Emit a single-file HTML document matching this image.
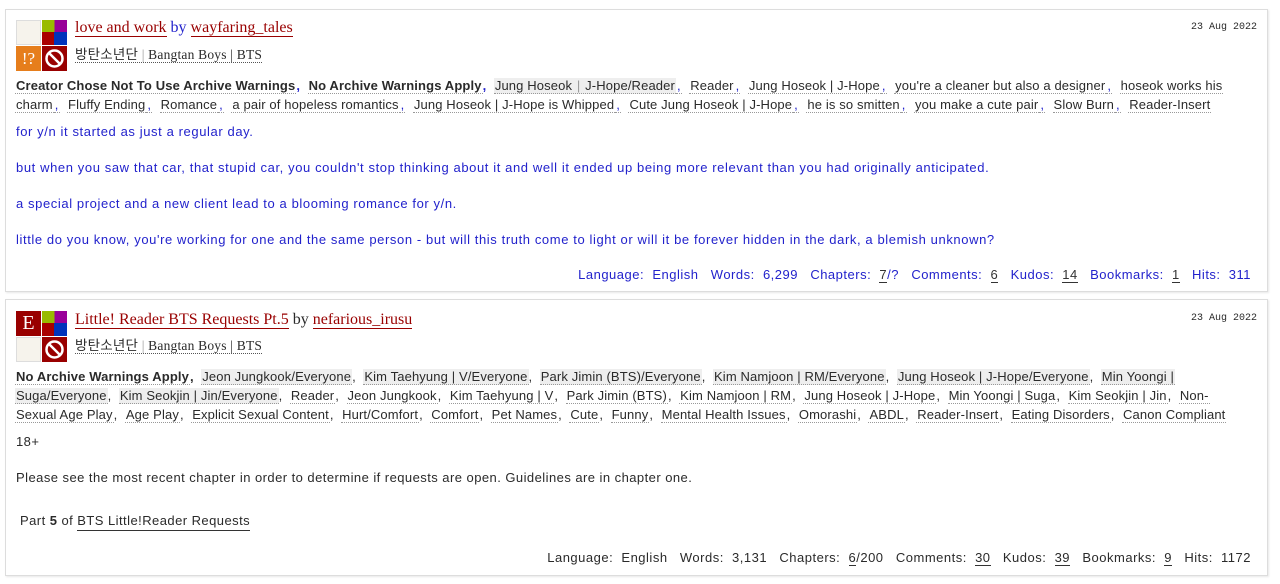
<!DOCTYPE html>
<html><head><meta charset="utf-8">
<style>
body{margin:0;background:#fff;font-family:"Liberation Sans","Noto Sans CJK KR",sans-serif;font-size:13px;letter-spacing:0.45px;color:#2a2a2a;width:1280px;height:584px;overflow:hidden;position:relative}
.box{position:absolute;left:5px;width:1261px;border:1px solid #ddd;box-shadow:1px 1px 2px #e8e8e8}
.l{position:absolute;white-space:nowrap}
.h{font-family:"Liberation Serif","Noto Serif CJK SC",serif;font-size:16px;letter-spacing:0}
.h a{color:#900;text-decoration:none;border-bottom:1px solid #900}
.f{font-family:"Liberation Serif","Noto Sans CJK KR",serif;font-size:13.5px;letter-spacing:0.2px}
.f span{border-bottom:1px dotted #555}
.t{letter-spacing:0.13px}
.t span{border-bottom:1px dotted #999;padding:0 1px}
.t .g{background:#eee}
.c{color:#22c}
.s{letter-spacing:0.6px}
.date{position:absolute;right:10px;font-family:"Liberation Mono",monospace;font-size:10px;letter-spacing:0}
.ic{position:absolute;width:25px;height:25px;letter-spacing:0}
.u{border-bottom:1px solid #333}
.st{letter-spacing:0.5px}
</style></head><body>

<div class="box" style="top:9px;height:281px">
  <div class="ic" style="left:10px;top:10px;background:#f6f3ec;border:1px solid #ddd;width:23px;height:23px"></div>
  <div class="ic" style="left:36px;top:10px;background:linear-gradient(to right,#9b0 50%,#909 50%);"><div style="position:absolute;top:12px;left:0;width:12px;height:13px;background:#a00"></div><div style="position:absolute;top:12px;left:12px;width:13px;height:13px;background:#03b"></div></div>
  <div class="ic" style="left:10px;top:36px;background:#e67e1c;color:#fff;font:17px 'Liberation Serif',serif;text-align:center;line-height:25px">!?</div>
  <div class="ic" style="left:36px;top:36px;background:#900"><svg width="25" height="25"><circle cx="12.5" cy="12.5" r="8" fill="none" stroke="#fff" stroke-width="2.5"/><line x1="7" y1="7" x2="18" y2="18" stroke="#fff" stroke-width="2.5"/></svg></div>
  <div class="l h" style="left:69px;top:9px"><a>love and work</a> <span style="color:#22c">by</span> <a>wayfaring_tales</a></div>
  <div class="l f" style="left:69px;top:33px"><span>방탄소년단 <span style="color:#999;border:0">|</span> Bangtan Boys | BTS</span></div>
  <div class="date" style="top:12px">23 Aug 2022</div>
  <div class="l t" style="left:9px;top:66px;line-height:19px"><span><b>Creator Chose Not To Use Archive Warnings</b></span><b class="c">,</b> &nbsp;<span><b>No Archive Warnings Apply</b></span><b class="c">,</b> &nbsp;<span class="g">Jung Hoseok <span style="color:#999;border:0">|</span> J-Hope/Reader</span><span class="c">,</span> &nbsp;<span>Reader</span><span class="c">,</span> &nbsp;<span>Jung Hoseok | J-Hope</span><span class="c">,</span> &nbsp;<span>you're a cleaner but also a designer</span><span class="c">,</span> &nbsp;<span>hoseok works his</span><br><span>charm</span><span class="c">,</span> &nbsp;<span>Fluffy Ending</span><span class="c">,</span> &nbsp;<span>Romance</span><span class="c">,</span> &nbsp;<span>a pair of hopeless romantics</span><span class="c">,</span> &nbsp;<span>Jung Hoseok | J-Hope is Whipped</span><span class="c">,</span> &nbsp;<span>Cute Jung Hoseok | J-Hope</span><span class="c">,</span> &nbsp;<span>he is so smitten</span><span class="c">,</span> &nbsp;<span>you make a cute pair</span><span class="c">,</span> &nbsp;<span>Slow Burn</span><span class="c">,</span> &nbsp;<span>Reader-Insert</span></div>
  <div class="l c s" style="left:10px;top:114px">for y/n it started as just a regular day.</div>
  <div class="l c s" style="left:10px;top:150px">but when you saw that car, that stupid car, you couldn't stop thinking about it and well it ended up being more relevant than you had originally anticipated.</div>
  <div class="l c s" style="left:10px;top:186px">a special project and a new client lead to a blooming romance for y/n.</div>
  <div class="l c s" style="left:10px;top:222px">little do you know, you're working for one and the same person - but will this truth come to light or will it be forever hidden in the dark, a blemish unknown?</div>
  <div class="l c st" style="right:16px;top:257px">Language: &nbsp;English &nbsp; Words: &nbsp;6,299 &nbsp; Chapters: &nbsp;<span class="u" style="color:#333">7</span>/? &nbsp; Comments: &nbsp;<span class="u" style="color:#333">6</span> &nbsp; Kudos: &nbsp;<span class="u" style="color:#333">14</span> &nbsp; Bookmarks: &nbsp;<span class="u" style="color:#333">1</span> &nbsp; Hits: &nbsp;311</div>
</div>

<div class="box" style="top:299px;height:275px">
  <div class="ic" style="left:10px;top:11px;background:#900;color:#fff;font:20px 'Liberation Serif',serif;text-align:center;line-height:25px">E</div>
  <div class="ic" style="left:36px;top:11px;background:linear-gradient(to right,#9b0 50%,#909 50%);"><div style="position:absolute;top:12px;left:0;width:12px;height:13px;background:#a00"></div><div style="position:absolute;top:12px;left:12px;width:13px;height:13px;background:#03b"></div></div>
  <div class="ic" style="left:10px;top:37px;background:#f6f3ec;border:1px solid #ddd;width:23px;height:23px"></div>
  <div class="ic" style="left:36px;top:37px;background:#900"><svg width="25" height="25"><circle cx="12.5" cy="12.5" r="8" fill="none" stroke="#fff" stroke-width="2.5"/><line x1="7" y1="7" x2="18" y2="18" stroke="#fff" stroke-width="2.5"/></svg></div>
  <div class="l h" style="left:69px;top:11px"><a>Little! Reader BTS Requests Pt.5</a> by <a>nefarious_irusu</a></div>
  <div class="l f" style="left:69px;top:34px"><span>방탄소년단 <span style="color:#999;border:0">|</span> Bangtan Boys | BTS</span></div>
  <div class="date" style="top:13px">23 Aug 2022</div>
  <div class="l t" style="left:9px;top:67px;line-height:19px"><span><b>No Archive Warnings Apply</b></span><b>,</b> &nbsp;<span class="g">Jeon Jungkook/Everyone</span>, &nbsp;<span class="g">Kim Taehyung | V/Everyone</span>, &nbsp;<span class="g">Park Jimin (BTS)/Everyone</span>, &nbsp;<span class="g">Kim Namjoon | RM/Everyone</span>, &nbsp;<span class="g">Jung Hoseok | J-Hope/Everyone</span>, &nbsp;<span class="g">Min Yoongi |</span><br><span class="g">Suga/Everyone</span>, &nbsp;<span class="g">Kim Seokjin | Jin/Everyone</span>, &nbsp;<span>Reader</span>, &nbsp;<span>Jeon Jungkook</span>, &nbsp;<span>Kim Taehyung | V</span>, &nbsp;<span>Park Jimin (BTS)</span>, &nbsp;<span>Kim Namjoon | RM</span>, &nbsp;<span>Jung Hoseok | J-Hope</span>, &nbsp;<span>Min Yoongi | Suga</span>, &nbsp;<span>Kim Seokjin | Jin</span>, &nbsp;<span>Non-</span><br><span>Sexual Age Play</span>, &nbsp;<span>Age Play</span>, &nbsp;<span>Explicit Sexual Content</span>, &nbsp;<span>Hurt/Comfort</span>, &nbsp;<span>Comfort</span>, &nbsp;<span>Pet Names</span>, &nbsp;<span>Cute</span>, &nbsp;<span>Funny</span>, &nbsp;<span>Mental Health Issues</span>, &nbsp;<span>Omorashi</span>, &nbsp;<span>ABDL</span>, &nbsp;<span>Reader-Insert</span>, &nbsp;<span>Eating Disorders</span>, &nbsp;<span>Canon Compliant</span></div>
  <div class="l" style="left:10px;top:134px">18+</div>
  <div class="l" style="left:10px;top:170px">Please see the most recent chapter in order to determine if requests are open. Guidelines are in chapter one.</div>
  <div class="l" style="left:14px;top:213px">Part <b>5</b> of <span class="u" style="padding-bottom:2px">BTS Little!Reader Requests</span></div>
  <div class="l st" style="right:16px;top:250px">Language: &nbsp;English &nbsp; Words: &nbsp;3,131 &nbsp; Chapters: &nbsp;<span class="u">6</span>/200 &nbsp; Comments: &nbsp;<span class="u">30</span> &nbsp; Kudos: &nbsp;<span class="u">39</span> &nbsp; Bookmarks: &nbsp;<span class="u">9</span> &nbsp; Hits: &nbsp;1172</div>
</div>
</body></html>
